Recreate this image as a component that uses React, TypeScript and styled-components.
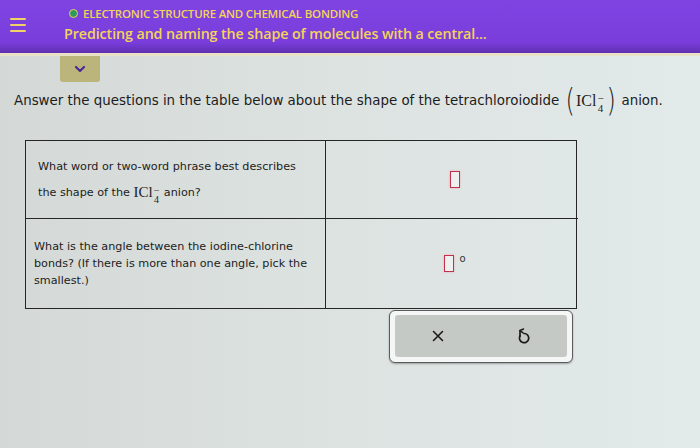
import styled, { createGlobalStyle } from 'styled-components';

const GlobalStyle = createGlobalStyle`
  html, body {
    margin: 0;
    padding: 0;
  }
  body {
    width: 700px;
    height: 448px;
    overflow: hidden;
    background: linear-gradient(90deg, #d4d9d7 0%, #dce2e0 45%, #e2eaea 100%);
    font-family: 'DejaVu Sans', Verdana, sans-serif;
    color: #1c1c1c;
  }
`;

const Page = styled.div`
  width: 700px;
  height: 448px;
  display: flex;
  flex-direction: column;
`;

const Header = styled.header`
  height: 53px;
  background: linear-gradient(180deg, #7e44e2 0%, #7a3ddc 80%, #5f2fb0 100%);
  display: flex;
  align-items: center;
  padding: 0 0 0 10px;
  gap: 38px;
  border-bottom: 3px solid #e8e3c6;
  box-sizing: content-box;
`;

const Burger = styled.div`
  width: 16px;
  display: flex;
  flex-direction: column;
  gap: 4px;
  margin-top: -4px;
  & > span {
    display: block;
    height: 2px;
    border-radius: 1px;
    background: #f1d264;
  }
`;

const Titles = styled.div`
  display: flex;
  flex-direction: column;
  gap: 3px;
  margin-top: -4px;
  font-family: 'Open Sans', sans-serif;
  color: #f3d45a;
`;

const Topic = styled.div`
  display: flex;
  align-items: center;
  gap: 5px;
  padding-left: 5px;
  font-size: 11.5px;
  font-weight: 600;
  letter-spacing: -0.2px;
`;

const Dot = styled.span`
  width: 7px;
  height: 7px;
  border-radius: 50%;
  background: #2c9a5a;
  border: 1.5px solid #e8d070;
`;

const Title = styled.div`
  font-size: 14.3px;
  font-weight: 600;
  letter-spacing: -0.1px;
`;

const TabRow = styled.div`
  padding-left: 60px;
`;

const Tab = styled.div`
  width: 40px;
  height: 26px;
  background: #bcb57b;
  border-radius: 0 0 3px 3px;
  display: flex;
  align-items: center;
  justify-content: center;
`;

const Intro = styled.p`
  margin: 2px 0 0 14px;
  font-size: 13.4px;
  line-height: 34px;
  display: flex;
  align-items: center;
  white-space: nowrap;
`;

const Formula = styled.span<{ $size: number }>`
  font-family: 'Liberation Serif', 'Times New Roman', serif;
  font-size: ${(p) => p.$size}px;
  display: inline-flex;
  align-items: center;
  vertical-align: middle;
  line-height: 1;
`;

const Paren = styled.span`
  font-family: 'DejaVu Sans', sans-serif;
  font-weight: 200;
  font-size: 32px;
  line-height: 32px;
  transform: scaleX(0.75);
  margin-top: -2px;
`;

const Scripts = styled.span<{ $size: number }>`
  display: inline-flex;
  flex-direction: column;
  align-items: center;
  font-size: ${(p) => p.$size}px;
  line-height: ${(p) => p.$size - 1}px;
  margin: 0 1px 0 1px;
  transform: translateY(2px);
`;

const Table = styled.div`
  margin: 22px 0 0 25px;
  width: 552px;
  display: grid;
  grid-template-columns: 300px 252px;
  grid-template-rows: 78px 89px;
  border: 1px solid #262626;
  box-sizing: border-box;
`;

const Cell = styled.div<{ $right?: boolean; $bottom?: boolean }>`
  border-right: ${(p) => (p.$right ? 'none' : '1px solid #262626')};
  border-bottom: ${(p) => (p.$bottom ? 'none' : '1px solid #262626')};
  display: flex;
  align-items: center;
  justify-content: ${(p) => (p.$right ? 'center' : 'flex-start')};
`;

const Question = styled.div<{ $pad: number; $lh: number }>`
  font-size: 11.2px;
  line-height: ${(p) => p.$lh}px;
  padding: 0 6px 0 ${(p) => p.$pad}px;
`;

const Line = styled.div`
  display: flex;
  align-items: center;
  white-space: nowrap;
`;

const Answer = styled.div`
  display: flex;
  align-items: flex-start;
  gap: 5px;
  margin-left: 6px;
`;

const Blank = styled.span`
  width: 8px;
  height: 15px;
  border: 1.5px solid #c2304a;
  box-shadow: 0 0 2px #f0a8b4;
  background: #eef0f0;
`;

const Degree = styled.span`
  font-size: 10px;
  line-height: 8px;
  color: #333;
`;

const PanelRow = styled.div`
  padding: 1px 0 0 389px;
`;

const Panel = styled.div`
  width: 184px;
  height: 53px;
  box-sizing: border-box;
  border: 1px solid #5a5d5c;
  border-radius: 6px;
  background: #f4f7f6;
  padding: 4px 5px 5px 5px;
  box-shadow: 0 1px 2px rgba(0, 0, 0, 0.3);
`;

const Tools = styled.div`
  height: 100%;
  background: #c4c9c5;
  border-radius: 3px;
  display: grid;
  grid-template-columns: 1fr 1fr;
`;

const ToolButton = styled.button`
  border: none;
  background: transparent;
  display: flex;
  align-items: center;
  justify-content: center;
  padding: 0;
  color: #1a1a1a;
`;

function Ion({ size, scriptSize, parens }: { size: number; scriptSize: number; parens?: boolean }) {
  return (
    <Formula $size={size}>
      {parens && <Paren>(</Paren>}
      ICl
      <Scripts $size={scriptSize}>
        <span>−</span>
        <span>4</span>
      </Scripts>
      {parens && <Paren>)</Paren>}
    </Formula>
  );
}

export default function App() {
  return (
    <Page>
      <GlobalStyle />
      <Header>
        <Burger>
          <span />
          <span />
          <span />
        </Burger>
        <Titles>
          <Topic>
            <Dot />
            ELECTRONIC STRUCTURE AND CHEMICAL BONDING
          </Topic>
          <Title>Predicting and naming the shape of molecules with a central...</Title>
        </Titles>
      </Header>
      <TabRow>
        <Tab>
          <svg width="12" height="8" viewBox="0 0 12 8">
            <path d="M2 2 L6 6 L10 2" fill="none" stroke="#4b2a94" strokeWidth="2.2" strokeLinecap="round" strokeLinejoin="round" />
          </svg>
        </Tab>
      </TabRow>
      <Intro>
        Answer the questions in the table below about the shape of the tetrachloroiodide&nbsp;
        <Ion size={16} scriptSize={11} parens />
        &nbsp;anion.
      </Intro>
      <Table>
        <Cell>
          <Question $pad={12} $lh={26}>
            <Line>What word or two-word phrase best describes</Line>
            <Line>
              the shape of the&nbsp;
              <Ion size={15} scriptSize={10} />
              &nbsp;anion?
            </Line>
          </Question>
        </Cell>
        <Cell $right>
          <Answer>
            <Blank />
          </Answer>
        </Cell>
        <Cell $bottom>
          <Question $pad={8} $lh={17}>
            What is the angle between the iodine-chlorine bonds? (If there is more than one angle, pick the smallest.)
          </Question>
        </Cell>
        <Cell $right $bottom>
          <Answer>
            <Blank />
            <Degree>o</Degree>
          </Answer>
        </Cell>
      </Table>
      <PanelRow>
        <Panel>
          <Tools>
            <ToolButton aria-label="clear">
              <svg width="14" height="14" viewBox="0 0 14 14">
                <path d="M2.5 2.5 L11.5 11.5 M11.5 2.5 L2.5 11.5" stroke="#1a1a1a" strokeWidth="1.6" strokeLinecap="round" />
              </svg>
            </ToolButton>
            <ToolButton aria-label="undo">
              <svg width="14" height="16" viewBox="0 0 14 16">
                <path d="M7 5.5 A4.6 4.6 0 1 1 3 8" fill="none" stroke="#1a1a1a" strokeWidth="1.7" strokeLinecap="round" />
                <path d="M3 8 L3 2.5" fill="none" stroke="#1a1a1a" strokeWidth="1.7" strokeLinecap="round" />
                <path d="M3 2.5 L6.5 1 M3 2.5 L6 4.8" fill="none" stroke="#1a1a1a" strokeWidth="1.5" strokeLinecap="round" />
              </svg>
            </ToolButton>
          </Tools>
        </Panel>
      </PanelRow>
    </Page>
  );
}
